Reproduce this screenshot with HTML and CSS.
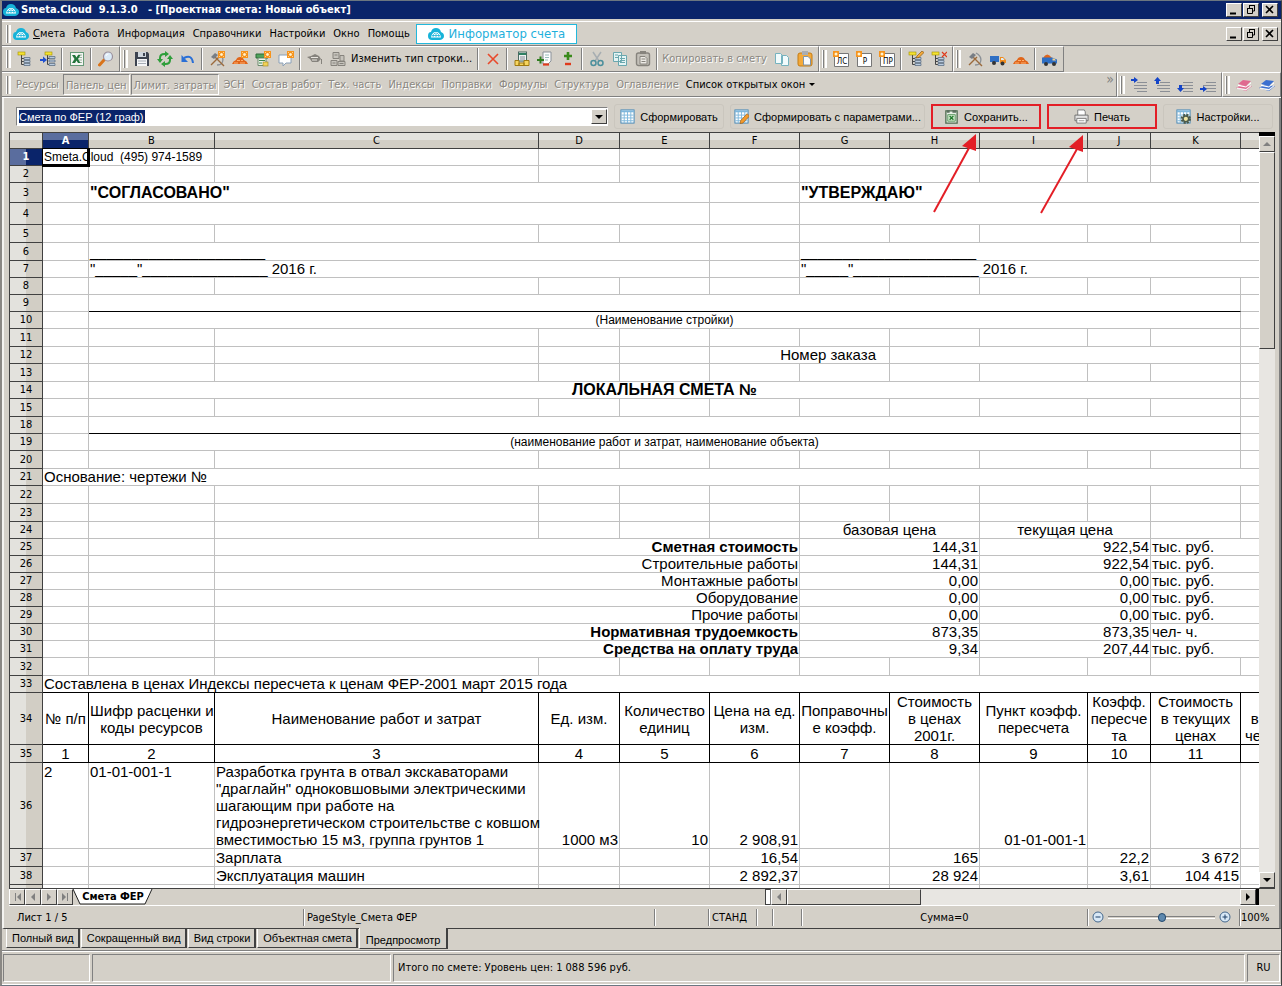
FILE: index.html
```html
<!DOCTYPE html>
<html lang="ru">
<head>
    <meta charset="UTF-8">
    <meta name="viewport" content="width=device-width, initial-scale=1.0">
    <title>Smeta.Cloud 9.1.3.0</title>
    <link rel="stylesheet" href="styles.css">
</head>
<body>
    <svg class="sprite" aria-hidden="true">
        <symbol id="cloud" viewBox="0 0 16 14">
            <path d="M4 13Q0 13 0 9T3 5Q4 1 8 1T13 5Q16 6 16 9T12 13Z" fill="#17b3d9"/>
            <path d="M3 10.500Q4 5 8 5T13 10.500Z" fill="#fff"/>
            <path d="M5 10Q5 7 7 6M8 5.500V10M11 10Q11 7 9 6M4 8.500H12" stroke="#17b3d9" stroke-width=".8" fill="none"/>
        </symbol>
        <symbol id="star" viewBox="0 0 16 16">
            <path d="M9 0H16V7H9Z" fill="#f7941d"/>
            <path d="M10 1L15 6M15 1L10 6" stroke="#ffe0a8" stroke-width=".8"/>
            <circle cx="12.500" cy="3.500" r="1.800" fill="#fff3cf" stroke="#f08000" stroke-width=".6"/>
        </symbol>
        <symbol id="tree" viewBox="0 0 16 16">
            <path d="M4.500 3V13.500H8M4.500 7.500H8M4.500 10.500H8" stroke="#444" fill="none"/>
            <rect x="1" y="1" width="7" height="3" fill="#f4e232" stroke="#a09000" stroke-width=".6"/>
            <path d="M7 6.500H13V8.500H7ZM7 9.500H13V11.500H7ZM7 12.500H13V14.500H7Z" fill="#b9cbe0" stroke="#5f7287" stroke-width=".8"/>
        </symbol>
        <symbol id="tree-in" viewBox="0 0 16 16">
            <path d="M7.500 3V13.500H10M7.500 7.500H10" stroke="#444" fill="none"/>
            <rect x="5" y="1" width="7" height="3" fill="#f4e232" stroke="#a09000" stroke-width=".6"/>
            <path d="M9 5.500H15V7.500H9ZM9 9H15V11H9ZM9 12.500H15V14.500H9Z" fill="#b9cbe0" stroke="#5f7287" stroke-width=".8"/>
            <path d="M0 8H3V5.500L7 9L3 12V10H0Z" fill="#1f4fd0"/>
        </symbol>
        <symbol id="excel" viewBox="0 0 16 16">
            <rect x="1.500" y="1.500" width="13" height="13" fill="#f3f5f3" stroke="#697"/>
            <path d="M9 4H13M9 6.500H13M9 9H13M9 11.500H13" stroke="#9ab39d"/>
            <path d="M3 4H6L7.500 6.500L9 4H11.500L9 8L11.500 12H9L7.500 9.500L6 12H3L5.500 8Z" fill="#21743a"/>
        </symbol>
        <symbol id="lens" viewBox="0 0 16 16">
            <path d="M6.500 8.500L1.500 14" stroke="#d9731a" stroke-width="3" stroke-linecap="round"/>
            <circle cx="10" cy="5.500" r="4.500" fill="#dcebf8" stroke="#9a8f9b" stroke-width="1.200"/>
            <path d="M8 5Q8 3 10.500 3" stroke="#fff" fill="none"/>
        </symbol>
        <symbol id="floppy" viewBox="0 0 16 16">
            <path d="M1 1H13.500L15 2.500V15H1Z" fill="#3c4350"/>
            <rect x="4" y="1" width="8" height="5" fill="#cfd6de"/>
            <rect x="9" y="2" width="2" height="3" fill="#3c4350"/>
            <rect x="3" y="8" width="10" height="7" fill="#f4f5f7"/>
            <path d="M4 10H12M4 12.500H12" stroke="#a6adb6"/>
        </symbol>
        <symbol id="refresh" viewBox="0 0 16 16">
            <path d="M3 9V7Q3 3 7.500 3H9M13 7V9Q13 13 8.500 13H7" stroke="#2f9e3b" stroke-width="2" fill="none"/>
            <path d="M8 0L12 3L8 6ZM8 10L4 13L8 16ZM0 8H6L3 12ZM16 8H10L13 4Z" fill="#2f9e3b"/>
        </symbol>
        <symbol id="undo" viewBox="0 0 16 16">
            <path d="M4 7Q12 3 13 12" stroke="#2a6fd6" stroke-width="2" fill="none"/>
            <path d="M1.500 4V11H8Z" fill="#2a6fd6"/>
        </symbol>
        <symbol id="hammer" viewBox="0 0 16 16">
            <path d="M9 2Q16 6 13 12Q12 14 8 14" stroke="#8b9096" stroke-width="1.300" fill="none"/>
            <path d="M2 14L10 6M6 6L15 15" stroke="#9b6a3c" stroke-width="1.400"/>
            <path d="M2 6L6 2L9 4L5 8Z" fill="#787e85"/>
        </symbol>
        <symbol id="pile" viewBox="0 0 16 16">
            <path d="M0 13Q1 10 4 9Q5 6 8 6T12 9Q15 10 16 13Z" fill="#e0661b"/>
            <path d="M2 12H6M8 12H13M5 9.500H8M9 9.500H11" stroke="#ffb070"/>
        </symbol>
        <symbol id="machine" viewBox="0 0 16 16">
            <path d="M1 3H13V7H1Z" fill="#4fa35b" stroke="#2c6b38"/>
            <path d="M3 7H11V14.500H3Z" fill="#eef3ec" stroke="#6b8a6d"/>
            <path d="M4 9.500H10M4 12H7" stroke="#3f8a4b"/>
            <rect x="8" y="11" width="5" height="4" fill="#f2d256" stroke="#9a8420" stroke-width=".6"/>
        </symbol>
        <symbol id="bubble" viewBox="0 0 16 16">
            <path d="M1 4H13V12H8L5 15V12H1Z" fill="#fff" stroke="#8aa0b8"/>
        </symbol>
        <symbol id="kettle" viewBox="0 0 16 16">
            <path d="M0 6L4 5L8 3L12 5L14 8L11 11H5L3 8Z" fill="#86837d"/>
            <path d="M4 6.500H11M5 9H10" stroke="#e8e5df"/>
            <path d="M14.500 8V13" stroke="#86837d"/>
        </symbol>
        <symbol id="blocks" viewBox="0 0 16 16">
            <path d="M3 1.500H9V7.500H3ZM1 9.500H7V14.500H1ZM8 10.500H15V14.500H8ZM10 4.500H14V10H10Z" fill="#c6c3bc" stroke="#86837d"/>
            <path d="M4.500 4H7.500M2.500 12H5.500M9.500 12.500H13.500" stroke="#86837d"/>
        </symbol>
        <symbol id="cross" viewBox="0 0 16 16">
            <path d="M3 3L13 13M13 3L3 13" stroke="#e8492b" stroke-width="1.600"/>
        </symbol>
        <symbol id="calc" viewBox="0 0 16 16">
            <rect x="4.500" y="1" width="8" height="9" fill="#eef3f2" stroke="#4a6a62"/>
            <path d="M5 3H12" stroke="#2f8064" stroke-width="2"/>
            <path d="M6 6H11M6 8H11" stroke="#889"/>
            <path d="M1 9.500H5V14.500H1ZM10 9.500H15V14.500H10ZM5 12H10V14.500H5Z" fill="#f6d560" stroke="#a07a10"/>
        </symbol>
        <symbol id="doc-pm" viewBox="0 0 16 16">
            <path d="M6 1H14V10L11 13H6Z" fill="#fdfdfd" stroke="#8a9199"/>
            <path d="M8 4H12M8 6.500H12M8 9H11" stroke="#9bb"/>
            <path d="M0 9H7M3.500 5.500V12.500" stroke="#2f7d1f" stroke-width="2"/>
            <path d="M6 13.500H12" stroke="#e03a1c" stroke-width="2.200"/>
        </symbol>
        <symbol id="plus-minus" viewBox="0 0 16 16">
            <path d="M4 5H12M8 1V9" stroke="#3a8a1b" stroke-width="2.600"/>
            <path d="M5 13H11" stroke="#e03a1c" stroke-width="2.400"/>
        </symbol>
        <symbol id="scissors" viewBox="0 0 16 16">
            <path d="M4 1L10 10M12 1L6 10" stroke="#a7aeb2" stroke-width="1.500"/>
            <circle cx="4.500" cy="12" r="2.500" fill="none" stroke="#4b8f9c" stroke-width="1.500"/>
            <circle cx="11.500" cy="12" r="2.500" fill="none" stroke="#4b8f9c" stroke-width="1.500"/>
        </symbol>
        <symbol id="copy" viewBox="0 0 16 16">
            <path d="M1.500 1.500H9.500V10.500H1.500ZM6.500 4.500H14.500V14.500H6.500Z" fill="#e4f4f4" stroke="#6aa7ae"/>
            <path d="M3 4H6M3 6.500H6M8 7.500H13M8 9.500H13M8 11.500H13" stroke="#6aa7ae"/>
        </symbol>
        <symbol id="copy-to" viewBox="0 0 16 16">
            <path d="M1.500 2.500H6.500L8.500 4.500V12.500H1.500ZM7.500 4.500H12.500L14.500 6.500V14.500H7.500Z" fill="#f2fbfc" stroke="#76b3bf"/>
        </symbol>
        <symbol id="paste-off" viewBox="0 0 16 16">
            <rect x="1.500" y="2" width="13" height="12.500" rx="2" fill="#c3c0b9" stroke="#86837d" stroke-width="1.400"/>
            <rect x="5" y="0" width="6" height="3" fill="#86837d"/>
            <path d="M5 5.500H10L12 7.500V13H5Z" fill="#eceae5" stroke="#86837d"/>
            <path d="M6.500 8H10.500M6.500 10.500H10.500" stroke="#86837d"/>
        </symbol>
        <symbol id="paste" viewBox="0 0 16 16">
            <rect x="1" y="2" width="14" height="13" rx="2" fill="#f3a93a" stroke="#c47c14"/>
            <rect x="5" y="0" width="6" height="4" fill="#a9adb3"/>
            <path d="M6.500 5.500H11L13.500 8V14H6.500Z" fill="#f7fafd" stroke="#7f95ab"/>
        </symbol>
        <symbol id="page" viewBox="0 0 16 16">
            <path d="M1.500 2.500H15.500V15.500H1.500Z" fill="#fff" stroke="#777"/>
            <path d="M0 0H6V6H0Z" fill="#f7941d"/>
            <circle cx="3" cy="3" r="1.500" fill="#fff3cf"/>
        </symbol>
        <symbol id="pencil" viewBox="0 0 16 16">
            <path d="M9 5L14 0L16 1.500L11 6.500L8 7Z" fill="#f3a93a" stroke="#8a5a14" stroke-width=".7"/>
        </symbol>
        <symbol id="x-small" viewBox="0 0 16 16">
            <path d="M11 1L16 6M16 1L11 6" stroke="#e03a1c" stroke-width="1.200"/>
        </symbol>
        <symbol id="truck" viewBox="0 0 16 16">
            <path d="M0 5H9V11H0Z" fill="#2f6fc4"/>
            <path d="M10 6H13L16 9V12H10Z" fill="#f28c1e"/>
            <path d="M11 7H13L14.500 9H11Z" fill="#d9ecf8"/>
            <circle cx="4" cy="12" r="2" fill="#333"/>
            <circle cx="12.500" cy="12.500" r="2" fill="#333"/>
        </symbol>
        <symbol id="truck-load" viewBox="0 0 16 16">
            <path d="M1 7Q5 0 10 7Z" fill="#e0661b"/>
            <path d="M0 6.500H10L15 8.500V12.500H0Z" fill="#2f6fc4"/>
            <path d="M10.500 7.500H12.500L14 9.500H10.500Z" fill="#f3d08c"/>
            <circle cx="4" cy="13" r="2" fill="#333"/>
            <circle cx="12" cy="13" r="2" fill="#333"/>
        </symbol>
        <symbol id="lines" viewBox="0 0 16 16">
            <path d="M6 5.500H16M3 8.500H16M3 11.500H16M6 14.500H16" stroke="#8b8f96"/>
        </symbol>
        <symbol id="go-right" viewBox="0 0 16 16"><path d="M0 2H3V0L7 3L3 6V4H0Z" fill="#1444c8"/></symbol>
        <symbol id="go-up" viewBox="0 0 16 16"><path d="M2 7V4H0L3.500 0L7 4H5V7Z" fill="#1444c8"/></symbol>
        <symbol id="go-down" viewBox="0 0 16 16"><path d="M2 8V11H0L3.500 15L7 11H5V8Z" fill="#1444c8"/></symbol>
        <symbol id="go-low" viewBox="0 0 16 16"><path d="M0 11H3V9L7 12L3 15V13H0Z" fill="#1444c8"/></symbol>
        <symbol id="books" viewBox="0 0 16 16">
            <path d="M0 11L5 8L16 9L10 14Z" fill="currentColor"/>
            <path d="M1 10.500L10 12L15 8V9.500L10 13.500L1 12Z" fill="#f2f2f2"/>
            <path d="M2 7L7 3L15 4L10 9Z" fill="currentColor"/>
            <path d="M2 7.500L10 9.500L15 5V6.500L10 10.500L2 9Z" fill="#fff"/>
        </symbol>
        <symbol id="table" viewBox="0 0 16 16">
            <rect x="1" y="1" width="14" height="14" fill="#fff" stroke="#3f84b5"/>
            <path d="M1 2.500H15" stroke="#7fb7dc" stroke-width="2"/>
            <path d="M1.500 6.500H14.500M1.500 9.500H14.500M1.500 12.500H14.500M4.500 3V15M8 3V15M11.500 3V15" stroke="#7fb7dc"/>
        </symbol>
        <symbol id="pen" viewBox="0 0 16 16">
            <path d="M7 12.500L14 5L16.500 7.500L9.500 15L6.500 15.500Z" fill="#f39a2c" stroke="#9a5a10" stroke-width=".7"/>
        </symbol>
        <symbol id="gear" viewBox="0 0 16 16">
            <circle cx="10.500" cy="10.500" r="4" fill="none" stroke="#4b5a4c" stroke-width="3" stroke-dasharray="2 1.140"/>
            <circle cx="10.500" cy="10.500" r="3" fill="#f0e6a4" stroke="#4b5a4c" stroke-width="1.600"/>
        </symbol>
        <symbol id="save-xls" viewBox="0 0 16 16">
            <path d="M2 2H14V15H2Z" fill="#e8efe6" stroke="#4e6b50" stroke-width="1.400"/>
            <path d="M3 1H6V4H3ZM9 1H13V4H9Z" fill="#5c6f5e"/>
            <path d="M4 6H12V13H4Z" fill="#cfe6cc" stroke="#5f9a62"/>
            <path d="M6 7.500L10 11.500M10 7.500L6 11.500" stroke="#1f7a2b" stroke-width="1.400"/>
        </symbol>
        <symbol id="printer" viewBox="0 0 16 16">
            <path d="M4 1H11L12 3V7H4Z" fill="#fff" stroke="#777"/>
            <path d="M1 6.500H15V12.500H1Z" fill="#e4e4e4" stroke="#6d6d6d"/>
            <path d="M3 10H13V15H3Z" fill="#fff" stroke="#777"/>
            <path d="M5 12.500H11" stroke="#999"/>
        </symbol>
    </svg>

    <div class="window">
        <header class="titlebar">
            <svg class="logo"><use href="#cloud"/></svg>
            <h1>Smeta.Cloud&nbsp; 9.1.3.0 &nbsp; - [Проектная смета: Новый объект]</h1>
            <div class="win-buttons">
                <button aria-label="Свернуть"><svg viewBox="0 0 16 14"><path d="M4 10.500H10" stroke="#000" stroke-width="2"/></svg></button>
                <button aria-label="Восстановить"><svg viewBox="0 0 16 14"><path d="M6 2.500H12M6.500 2V5M11.500 2V8H9.500M4 5.500H10M4.500 5V10.500H9.500V5" stroke="#000" fill="none"/></svg></button>
                <button class="close" aria-label="Закрыть"><svg viewBox="0 0 16 14"><path d="M4 3L11 10M11 3L4 10" stroke="#000" stroke-width="1.600"/></svg></button>
            </div>
        </header>

        <nav class="menubar">
            <span class="grip"></span>
            <svg class="logo"><use href="#cloud"/></svg>
            <a href="#"><u>С</u>мета</a>
            <a href="#">Работа</a>
            <a href="#">Информация</a>
            <a href="#">Справочники</a>
            <a href="#">Настройки</a>
            <a href="#">Окно</a>
            <a href="#">Помощь</a>
            <button class="informer"><svg class="logo"><use href="#cloud"/></svg>Информатор счета</button>
            <div class="win-buttons">
                <button aria-label="Свернуть окно"><svg viewBox="0 0 16 14"><path d="M4 10.500H10" stroke="#000" stroke-width="2"/></svg></button>
                <button aria-label="Восстановить окно"><svg viewBox="0 0 16 14"><path d="M6 2.500H12M6.500 2V5M11.500 2V8H9.500M4 5.500H10M4.500 5V10.500H9.500V5" stroke="#000" fill="none"/></svg></button>
                <button class="close" aria-label="Закрыть окно"><svg viewBox="0 0 16 14"><path d="M4 3L11 10M11 3L4 10" stroke="#000" stroke-width="1.600"/></svg></button>
            </div>
        </nav>

        <div class="toolbar">
            <div class="band">
                <span class="grip"></span>
                <button aria-label="Дерево"><svg><use href="#tree"/></svg></button>
                <button aria-label="Вставить в дерево"><svg><use href="#tree-in"/></svg></button>
                <i class="sep"></i>
                <button aria-label="Excel"><svg><use href="#excel"/></svg></button>
                <i class="sep"></i>
                <button aria-label="Поиск"><svg><use href="#lens"/></svg></button>
            </div>
            <div class="band">
                <span class="grip"></span>
                <button aria-label="Сохранить смету"><svg><use href="#floppy"/></svg></button>
                <button aria-label="Обновить"><svg><use href="#refresh"/></svg></button>
                <button aria-label="Отменить"><svg><use href="#undo"/></svg></button>
                <i class="sep"></i>
                <button aria-label="Новая работа"><svg><use href="#hammer"/><use href="#star"/></svg></button>
                <button aria-label="Новый материал"><svg><use href="#pile"/><use href="#star"/></svg></button>
                <button aria-label="Новое оборудование"><svg><use href="#machine"/><use href="#star"/></svg></button>
                <button aria-label="Новый комментарий"><svg><use href="#bubble"/><use href="#star"/></svg></button>
                <i class="sep"></i>
                <button aria-label="Механизм" disabled><svg><use href="#kettle"/></svg></button>
                <button aria-label="Блоки" disabled><svg><use href="#blocks"/></svg></button>
                <button class="text change">Изменить тип строки...</button>
                <i class="sep"></i>
                <button aria-label="Удалить"><svg><use href="#cross"/></svg></button>
                <i class="sep"></i>
                <button aria-label="Расчёт"><svg><use href="#calc"/></svg></button>
                <button aria-label="Изменить количество"><svg><use href="#doc-pm"/></svg></button>
                <button aria-label="Плюс минус"><svg><use href="#plus-minus"/></svg></button>
                <i class="sep"></i>
                <button aria-label="Вырезать"><svg><use href="#scissors"/></svg></button>
                <button aria-label="Копировать"><svg><use href="#copy"/></svg></button>
                <button aria-label="Вставить" disabled><svg><use href="#paste-off"/></svg></button>
                <i class="sep"></i>
                <button class="text copy" disabled>Копировать в смету</button>
                <button aria-label="Копировать в"><svg><use href="#copy-to"/></svg></button>
                <button aria-label="Вставить из"><svg><use href="#paste"/></svg></button>
            </div>
            <div class="band">
                <span class="grip"></span>
                <button aria-label="Локальная смета"><svg><use href="#page"/><text x="9" y="13">ЛС</text></svg></button>
                <button aria-label="Раздел"><svg><use href="#page"/><text x="9" y="13">Р</text></svg></button>
                <button aria-label="Подраздел"><svg><use href="#page"/><text x="9" y="13">ПР</text></svg></button>
                <i class="sep"></i>
                <button aria-label="Изменить раздел"><svg><use href="#tree"/><use href="#pencil"/></svg></button>
                <button aria-label="Удалить раздел"><svg><use href="#tree"/><use href="#x-small"/></svg></button>
            </div>
            <div class="band">
                <span class="grip"></span>
                <button aria-label="Работы"><svg><use href="#hammer"/></svg></button>
                <button aria-label="Перевозка"><svg><use href="#truck"/></svg></button>
                <button aria-label="Материалы"><svg><use href="#pile"/></svg></button>
                <i class="sep"></i>
                <button aria-label="Перевозка материалов"><svg><use href="#truck-load"/></svg></button>
            </div>
        </div>

        <div class="toolbar panels">
            <div class="band wide">
                <span class="grip"></span>
                <button class="text" disabled>Ресурсы</button>
                <button class="text pressed" disabled>Панель цен</button>
                <button class="text pressed" disabled>Лимит. затраты</button>
                <button class="text" disabled>ЭСН</button>
                <button class="text" disabled>Состав работ</button>
                <button class="text" disabled>Тех. часть</button>
                <button class="text" disabled>Индексы</button>
                <button class="text" disabled>Поправки</button>
                <button class="text" disabled>Формулы</button>
                <button class="text" disabled>Структура</button>
                <button class="text" disabled>Оглавление</button>
                <button class="text">Список открытых окон<span class="caret"></span></button>
                <span class="more">»</span>
            </div>
            <div class="band">
                <span class="grip"></span>
                <button aria-label="Вправо"><svg><use href="#lines"/><use href="#go-right"/></svg></button>
                <button aria-label="Вверх"><svg><use href="#lines"/><use href="#go-up"/></svg></button>
                <button aria-label="Вниз"><svg><use href="#lines"/><use href="#go-down"/></svg></button>
                <button aria-label="В конец"><svg><use href="#lines"/><use href="#go-low"/></svg></button>
            </div>
            <div class="band">
                <span class="grip"></span>
                <button class="pink" aria-label="Справочник"><svg><use href="#books"/></svg></button>
                <button class="blue" aria-label="Сборник"><svg><use href="#books"/></svg></button>
            </div>
        </div>

        <main class="work">
            <div class="report-bar">
                <div class="combo">
                    <select aria-label="Форма отчёта">
                        <option>Смета по ФЕР (12 граф)</option>
                    </select>
                    <span class="drop"><span class="caret"></span></span>
                </div>
                <button class="action"><svg class="icon"><use href="#table"/></svg>Сформировать</button>
                <button class="action large"><svg class="icon"><use href="#table"/><use href="#pen"/></svg>Сформировать с параметрами...</button>
                <div class="marked">
                    <button class="action"><svg class="icon"><use href="#save-xls"/></svg>Сохранить...</button>
                    <svg class="arrow" viewBox="0 0 50 80"><path d="M3 78L38 14" stroke="#e31e26" stroke-width="2"/><path d="M45 0L31 12L45 17Z" fill="#e31e26"/></svg>
                </div>
                <div class="marked">
                    <button class="action"><svg class="icon"><use href="#printer"/></svg>Печать</button>
                    <svg class="arrow" viewBox="0 0 50 80"><path d="M-6 79L30 15" stroke="#e31e26" stroke-width="2"/><path d="M36 1L22 13L36 18Z" fill="#e31e26"/></svg>
                </div>
                <button class="action"><svg class="icon"><use href="#table"/><use href="#gear"/></svg>Настройки...</button>
            </div>

            <div class="sheet-area">
                <div class="sheet">
                    <table id="sheet">
                        <colgroup>
                            <col class="w34"><col class="w46"><col class="w126"><col class="w324"><col class="w81">
                            <col class="w90"><col class="w90"><col class="w90"><col class="w90"><col class="w108">
                            <col class="w63"><col class="w90"><col class="w90">
                        </colgroup>
                        <thead>
                            <tr>
                                <th></th><th class="active">A</th><th>B</th><th>C</th><th>D</th><th>E</th><th>F</th>
                                <th>G</th><th>H</th><th>I</th><th>J</th><th>K</th><th></th>
                            </tr>
                        </thead>
                        <tbody></tbody>
                    </table>
                </div>
                <div class="vscroll">
                    <span class="black"></span>
                    <button aria-label="Прокрутить вверх" disabled><span class="tri up"></span></button>
                    <span class="thumb"></span>
                    <span class="track"></span>
                    <button aria-label="Прокрутить вниз"><span class="tri down"></span></button>
                </div>
            </div>

            <div class="sheet-tabs">
                <button class="nav" aria-label="Первый лист" disabled><span class="bar"></span><span class="tri left"></span></button>
                <button class="nav" aria-label="Предыдущий лист" disabled><span class="tri left"></span></button>
                <button class="nav" aria-label="Следующий лист" disabled><span class="tri right"></span></button>
                <button class="nav" aria-label="Последний лист" disabled><span class="tri right"></span><span class="bar"></span></button>
                <button class="sheet-tab">
                    <svg viewBox="0 0 80 16" preserveAspectRatio="none"><path d="M0 0L7 15H72L79 0" fill="#fff" stroke="#222"/></svg>
                    <span>Смета ФЕР</span>
                </button>
                <div class="hscroll">
                    <span class="split"></span>
                    <button aria-label="Прокрутить влево" disabled><span class="tri left"></span></button>
                    <span class="thumb"></span>
                    <span class="track"></span>
                    <button aria-label="Прокрутить вправо"><span class="tri right"></span></button>
                    <span class="black"></span>
                </div>
            </div>

            <div class="sheet-status">
                <span class="page-no">Лист 1 / 5</span>
                <span class="page-style">PageStyle_Смета ФЕР</span>
                <span class="mode-gap"></span>
                <span class="mode">СТАНД</span>
                <span class="flag-a"></span>
                <span class="flag-b"></span>
                <span class="sum">Сумма=0</span>
                <span class="zoom">
                    <svg viewBox="0 0 12 12"><circle cx="6" cy="6" r="5" fill="#d8e8f6" stroke="#44678c"/><path d="M3.500 6H8.500" stroke="#1d3f66"/></svg>
                    <input type="range" min="20" max="180" value="100" aria-label="Масштаб">
                    <svg viewBox="0 0 12 12"><circle cx="6" cy="6" r="5" fill="#d8e8f6" stroke="#44678c"/><path d="M3.500 6H8.500M6 3.500V8.500" stroke="#1d3f66"/></svg>
                </span>
                <span class="percent">100%</span>
            </div>
        </main>

        <nav class="view-tabs">
            <button>Полный вид</button>
            <button>Сокращенный вид</button>
            <button>Вид строки</button>
            <button>Объектная смета</button>
            <button class="current">Предпросмотр</button>
        </nav>

        <footer class="statusbar">
            <span class="s1"></span>
            <span class="s2"></span>
            <span class="total">Итого по смете: Уровень цен: 1 088 596 руб.</span>
            <span class="lang">RU</span>
        </footer>
    </div>

    <script src="script.js"></script>
</body>
</html>
```
FILE: styles.css
```css
* {
    box-sizing: border-box;
    margin: 0;
    padding: 0;
}
body {
    font-family: "DejaVu Sans Condensed", "DejaVu Sans", sans-serif;
    font-size: 11px;
    line-height: 14px;
    color: #000;
    background: #d4d0c8;
}
button, select, input {
    font: inherit;
    color: inherit;
    border: none;
    background: none;
}
button {
    display: flex;
    align-items: center;
    justify-content: center;
    white-space: nowrap;
    flex: none;
}
.sprite {
    display: none;
}
.window {
    display: flex;
    flex-direction: column;
    height: 100vh;
    min-width: 900px;
    overflow: hidden;
    border: 1px solid #6b7680;
    border-left: 2px solid #8a8884;
    border-right-color: #404040;
}

/* title and menu */
.titlebar {
    display: flex;
    align-items: center;
    flex: none;
    height: 18px;
    margin-bottom: 2px;
    padding: 0 3px 0 1px;
    background: #0a246a;
    color: #fff;
}
.titlebar h1 {
    flex: 1;
    padding-left: 2px;
    font-size: 11px;
    font-weight: bold;
}
.logo {
    flex: none;
    width: 16px;
    height: 14px;
}
.win-buttons {
    display: flex;
    gap: 1px;
    margin-left: auto;
}
.win-buttons button {
    width: 16px;
    height: 14px;
    background: #d4d0c8;
    border: 1px solid;
    border-color: #fff #404040 #404040 #fff;
}
.win-buttons .close {
    margin-left: 2px;
}
.win-buttons svg {
    width: 16px;
    height: 14px;
    flex: none;
}
.menubar {
    display: flex;
    align-items: center;
    flex: none;
    height: 25px;
    padding-right: 3px;
    border-top: 1px solid #fff;
    border-bottom: 1px solid #808080;
}
.menubar a {
    padding: 0 4px;
    color: #000;
    text-decoration: none;
}
.grip {
    flex: none;
    width: 5px;
    height: 18px;
    margin: 0 2px 0 4px;
    border: solid #fff;
    border-width: 0 1px;
    background: linear-gradient(90deg, #808080 1px, #d4d0c8 1px 2px, #fff 2px);
}
.informer {
    height: 20px;
    width: 161px;
    gap: 5px;
    margin-left: 2px;
    background: #fff;
    border: 1px solid #22b8dc;
    color: #1fb0dc;
    font-size: 13px;
}

/* toolbars */
.toolbar {
    display: flex;
    flex: none;
    height: 26px;
}
.panels {
    border-bottom: 1px solid #fff;
}
.band {
    display: flex;
    align-items: center;
    padding-right: 2px;
    border: 1px solid;
    border-color: #fff #808080 #808080 #fff;
    border-left-width: 0;
}
.band:not(:first-child) {
    border-left-width: 1px;
}
.band .grip {
    margin-left: 2px;
}
.band:first-child .grip {
    margin-left: 4px;
}
.band.wide {
    flex: 1;
    min-width: 0;
    overflow: hidden;
}
.band button {
    width: 23px;
    height: 22px;
}
.band svg {
    width: 16px;
    height: 16px;
    overflow: visible;
}
.band svg text {
    font-size: 8px;
    text-anchor: middle;
}
.band .text {
    width: auto;
    padding: 0 4px 0 3px;
}
.band .change {
    width: 126px;
}
.band .copy {
    width: 110px;
}
.band .text:disabled {
    color: #8a8781;
    text-shadow: 1px 1px 0 #fff;
}
.band .pressed {
    height: 21px;
    margin-right: 1px;
    padding: 2px 2px 0;
    border: 1px solid;
    border-color: #808080 #fff #fff #808080;
}
.band .pink {
    color: #e06a90;
}
.band .blue {
    color: #3a6fd0;
}
.sep {
    flex: none;
    width: 2px;
    height: 22px;
    margin: 0 2px;
    background: linear-gradient(90deg, #808080 1px, #fff 1px);
}
.caret {
    display: inline-block;
    border: 4px solid transparent;
    border-top-color: #000;
    border-bottom: 0;
}
.text .caret {
    border-width: 3px 3px 0;
    margin-left: 4px;
}
.more {
    align-self: flex-start;
    margin-left: auto;
    color: #808080;
    font-size: 14px;
    line-height: 12px;
}

/* preview area */
.work {
    display: flex;
    flex-direction: column;
    flex: 1;
    min-height: 0;
    border-left: 2px solid #f4f3f0;
    border-right: 2px solid #808080;
    border-bottom: 1px solid #404040;
}
.report-bar {
    display: flex;
    align-items: center;
    gap: 6px;
    flex: none;
    height: 34px;
    padding: 6px 6px 3px 12px;
    font-family: "Liberation Sans", sans-serif;
}
.combo {
    position: relative;
    flex: 1;
    min-width: 0;
    height: 19px;
    border: 1px solid;
    border-color: #808080 #fff #fff #808080;
}
.combo select {
    width: 100%;
    height: 17px;
    padding-left: 2px;
    appearance: none;
    color: #fff;
    background: linear-gradient(#0a246a, #0a246a) 2px 2px / 126px 13px no-repeat #fff;
}
.combo .drop {
    position: absolute;
    top: 1px;
    right: 0;
    display: flex;
    align-items: center;
    justify-content: center;
    width: 16px;
    height: 15px;
    pointer-events: none;
    background: #d4d0c8;
    border: 1px solid;
    border-color: #fff #404040 #404040 #fff;
}
.action {
    gap: 5px;
    width: 110px;
    height: 25px;
    border: 1px solid #cac6be;
    border-radius: 3px;
}
.action.large {
    width: 195px;
}
.icon {
    flex: none;
    width: 15px;
    height: 15px;
    overflow: visible;
}
.marked {
    position: relative;
    flex: none;
}
.marked .action {
    border: 2px solid #e31e26;
    border-radius: 0;
}
.arrow {
    position: absolute;
    top: 30px;
    left: 0;
    z-index: 2;
    width: 50px;
    height: 80px;
    overflow: visible;
    pointer-events: none;
}
.sheet-area {
    display: flex;
    flex: 1;
    min-height: 0;
    margin: 0 4px 0 5px;
}
.sheet {
    flex: 1;
    min-width: 0;
    overflow: hidden;
    background: #fff;
}
table {
    width: 1322px;
    table-layout: fixed;
    border-collapse: separate;
    border-spacing: 0;
    font-family: "Liberation Sans", sans-serif;
    font-size: 15px;
    line-height: 16px;
}
.w34 { width: 34px; }
.w46 { width: 46px; }
.w63 { width: 63px; }
.w81 { width: 81px; }
.w90 { width: 90px; }
.w108 { width: 108px; }
.w126 { width: 126px; }
.w324 { width: 324px; }
th {
    font-family: "DejaVu Sans Condensed", "DejaVu Sans", sans-serif;
    font-size: 11px;
    font-weight: normal;
    border: solid #404040;
    border-width: 0 1px 1px 0;
}
thead th {
    height: 17px;
    line-height: 15px;
    border-top-width: 1px;
    background: linear-gradient(#e3e2dd 50%, #d2cec5 50%);
}
tbody th {
    background: linear-gradient(90deg, #e3e2dd 50%, #d2cec5 50%);
}
th:first-child {
    border-left-width: 1px;
}
th.active {
    color: #fff;
    font-weight: bold;
    background: linear-gradient(#5a6d9e 50%, #0a246a 50%);
}
tbody th.active {
    background: linear-gradient(90deg, #5a6d9e 50%, #0a246a 50%);
}
td {
    padding: 0 1px;
    border: solid #c0c0c0;
    border-width: 0 1px 1px 0;
    white-space: nowrap;
}
.small {
    font-size: 12px;
}
.bold {
    font-weight: bold;
}
.big {
    font-size: 16px;
    font-weight: bold;
}
.center {
    text-align: center;
}
.right {
    text-align: right;
}
.indent {
    padding-right: 13px;
}
.wrap {
    line-height: 17px;
    white-space: pre;
}
.top {
    vertical-align: top;
    line-height: 17px;
}
.bottom {
    vertical-align: bottom;
    line-height: 17px;
}
.rule {
    border-bottom-color: #000;
}
.boxed td {
    border-color: #000;
}
.cursor {
    position: relative;
}
.cursor::after {
    content: "";
    position: absolute;
    inset: -1px -2px -2px -1px;
    border: solid #000;
    border-width: 1px 3px 3px 1px;
}

/* scrollbars */
.vscroll {
    display: flex;
    flex-direction: column;
    flex: none;
    width: 16px;
}
.vscroll .black {
    height: 4px;
    background: #000;
}
.vscroll button, .hscroll button, .nav {
    width: 16px;
    height: 16px;
    background: #d4d0c8;
    border: 1px solid;
    border-color: #fff #404040 #404040 #fff;
}
.thumb {
    flex: none;
    background: #d4d0c8;
    border: 1px solid;
    border-color: #fff #404040 #404040 #fff;
}
.vscroll .thumb {
    height: 26%;
}
.track {
    flex: 1;
    background: #e8e6e2;
}
.tri {
    border: 4px solid transparent;
}
.tri.up {
    border-top: 0;
    border-bottom-color: #000;
}
.tri.down {
    border-bottom: 0;
    border-top-color: #000;
}
.tri.left {
    border-left: 0;
    border-right-color: #000;
}
.tri.right {
    border-right: 0;
    border-left-color: #000;
}
button:disabled .tri.up {
    border-bottom-color: #808080;
}
button:disabled .tri.left {
    border-right-color: #808080;
}
button:disabled .tri.right {
    border-left-color: #808080;
}
.bar {
    width: 1px;
    height: 8px;
    margin: 0 1px;
    background: #808080;
}
.sheet-tabs {
    display: flex;
    flex: none;
    height: 18px;
    margin: 0 4px 0 5px;
    border-top: 1px solid #404040;
    border-bottom: 1px solid #fff;
}
.sheet-tab {
    position: relative;
    width: 80px;
    height: 16px;
    font-weight: bold;
}
.sheet-tab svg {
    position: absolute;
    inset: 0;
    width: 80px;
    height: 16px;
}
.sheet-tab span {
    position: relative;
}
.hscroll {
    display: flex;
    width: 39%;
    margin-left: auto;
    margin-right: 16px;
    height: 16px;
}
.split {
    flex: none;
    width: 6px;
    border: 1px solid #404040;
    border-right-color: #808080;
    background: #fff;
}
.hscroll .thumb {
    width: 27%;
}
.hscroll .black {
    width: 3px;
    background: #000;
}

/* status lines */
.sheet-status {
    display: flex;
    align-items: center;
    flex: none;
    height: 22px;
    padding: 2px 0 2px 5px;
}
.sheet-status > span {
    flex: none;
    height: 17px;
    padding: 2px 3px 0;
    border-left: 1px solid #808080;
    box-shadow: inset 1px 0 0 #fff;
}
.sheet-status .page-no {
    width: 294px;
    padding-left: 8px;
    border: none;
    box-shadow: none;
}
.sheet-status .page-style {
    flex: 1;
    min-width: 0;
}
.mode-gap {
    width: 54px;
}
.mode {
    width: 48px;
}
.flag-a {
    width: 16px;
}
.flag-b {
    width: 29px;
}
.sum {
    width: 286px;
    text-align: center;
}
.sheet-status .zoom {
    display: flex;
    align-items: center;
    gap: 4px;
    width: 152px;
    padding: 0 8px 0 4px;
}
.zoom svg {
    flex: none;
    width: 12px;
    height: 12px;
}
.zoom input {
    flex: 1;
    min-width: 0;
    height: 12px;
    appearance: none;
}
.zoom input::-webkit-slider-runnable-track {
    height: 3px;
    border-top: 1px solid #808080;
    border-bottom: 1px solid #fff;
}
.zoom input::-webkit-slider-thumb {
    appearance: none;
    width: 8px;
    height: 9px;
    margin-top: -4px;
    border: 1px solid #24496e;
    border-radius: 4px;
    background: #5d88ae;
}
.sheet-status .percent {
    width: 40px;
    padding-left: 1px;
}
.view-tabs {
    display: flex;
    flex: none;
    gap: 1px;
    height: 22px;
    padding-left: 4px;
    border-bottom: 1px solid #808080;
    font-family: "Liberation Sans", sans-serif;
}
.view-tabs button {
    height: 19px;
    padding: 0 4px 0 5px;
    border: solid;
    border-color: #fff #404040 #404040 #fff;
    border-width: 0 2px 1px 1px;
}
.view-tabs .current {
    height: 21px;
    margin-top: -1px;
    padding: 4px 6px 0;
    background: #d4d0c8;
}
.statusbar {
    display: flex;
    flex: none;
    gap: 2px;
    height: 34px;
    padding: 2px 1px;
    border-top: 1px solid #fff;
    border-bottom: 1px solid #fff;
}
.statusbar span {
    display: flex;
    align-items: center;
    padding: 0 4px;
    border: 1px solid;
    border-color: #808080 #fff #fff #808080;
}
.s1 {
    width: 87px;
}
.s2 {
    width: 299px;
}
.total {
    flex: 1;
}
.lang {
    width: 33px;
    justify-content: center;
}
```
FILE: script.js
```js
const COLUMNS = 12;
const LINE = '_____________________';
const DATE = '"_____"_______________ 2016 г.';

// each cell is [text, colspan, classes]; the rest of the row is filled with empty cells
const e = ['', 1, ''];
const money = (name, cls, base, now, unit) =>
    [e, e, [name, 4, 'right ' + cls], [base, 2, 'right'], [now, 2, 'right'], [unit, 2, '']];

const rows = [
    [1, 17, [['Smeta.Cloud\u00a0 (495) 974-1589', 1, 'small cursor']]],
    [2, 17, []],
    [3, 20, [e, ['"СОГЛАСОВАНО"', 4, 'big'], e, ['"УТВЕРЖДАЮ"', 6, 'big']]],
    [4, 22, [e, ['', 4, ''], e, ['', 6, '']]],
    [5, 18, []],
    [6, 18, [e, [LINE, 4, ''], e, [LINE, 6, '']]],
    [7, 17, [e, [DATE, 4, ''], e, [DATE, 6, '']]],
    [8, 17, []],
    [9, 17, [e, ['', 10, 'rule']]],
    [10, 17, [e, ['(Наименование стройки)', 10, 'small center']]],
    [11, 18, []],
    [12, 17, [e, e, e, e, e, ['Номер заказа', 2, 'right indent'], ['', 4, '']]],
    [13, 18, []],
    [14, 17, [e, ['ЛОКАЛЬНАЯ СМЕТА №', 10, 'big center']]],
    [15, 18, []],
    [18, 17, [e, ['', 10, 'rule']]],
    [19, 17, [e, ['(наименование работ и затрат, наименование объекта)', 10, 'small center']]],
    [20, 18, []],
    [21, 17, [['Основание: чертежи №', 12, '']]],
    [22, 18, []],
    [23, 18, []],
    [24, 17, [e, e, e, e, e, e, ['базовая цена', 2, 'center'], ['текущая цена', 2, 'center']]],
    [25, 17, money('Сметная стоимость', 'bold', '144,31', '922,54', 'тыс. руб.')],
    [26, 17, money('Строительные работы', '', '144,31', '922,54', 'тыс. руб.')],
    [27, 17, money('Монтажные работы', '', '0,00', '0,00', 'тыс. руб.')],
    [28, 17, money('Оборудование', '', '0,00', '0,00', 'тыс. руб.')],
    [29, 17, money('Прочие работы', '', '0,00', '0,00', 'тыс. руб.')],
    [30, 17, money('Нормативная трудоемкость', 'bold', '873,35', '873,35', 'чел- ч.')],
    [31, 17, money('Средства на оплату труда', 'bold', '9,34', '207,44', 'тыс. руб.')],
    [32, 18, []],
    [33, 17, [['Составлена в ценах Индексы пересчета к ценам ФЕР-2001 март 2015 года', 12, 'rule']]],
    [34, 52, ['№ п/п', 'Шифр расценки и\nкоды ресурсов', 'Наименование работ и затрат', 'Ед. изм.',
        'Количество\nединиц', 'Цена на ед.\nизм.', 'Поправочны\nе коэфф.', 'Стоимость\nв ценах\n2001г.',
        'Пункт коэфф.\nпересчета', 'Коэфф.\nпересче\nта', 'Стоимость\nв текущих\nценах', 'ЗТР\nв текущих\nчеловеко-ч.']
        .map(text => [text, 1, 'center wrap']), 'boxed'],
    [35, 18, ['1', '2', '3', '4', '5', '6', '7', '8', '9', '10', '11', '12'].map(text => [text, 1, 'center']), 'boxed'],
    [36, 86, [['2', 1, 'top'], ['01-01-001-1', 1, 'top'],
        ['Разработка грунта в отвал экскаваторами\n"драглайн" одноковшовыми электрическими\nшагающим при работе на\nгидроэнергетическом строительстве с ковшом\nвместимостью 15 м3, группа грунтов 1', 1, 'wrap'],
        ['1000 м3', 1, 'right bottom'], ['10', 1, 'right bottom'], ['2 908,91', 1, 'right bottom'],
        e, e, ['01-01-001-1', 1, 'right bottom']]],
    [37, 18, [e, e, ['Зарплата', 1, ''], e, e, ['16,54', 1, 'right'], e, ['165', 1, 'right'], e, ['22,2', 1, 'right'], ['3 672', 1, 'right']]],
    [38, 18, [e, e, ['Эксплуатация машин', 1, ''], e, e, ['2 892,37', 1, 'right'], e, ['28 924', 1, 'right'], e, ['3,61', 1, 'right'], ['104 415', 1, 'right']]],
    [39, 18, [e, e, e, e, e, ['137,43', 1, 'right'], e, ['1 374', 1, 'right'], e, ['22,2', 1, 'right'], ['30 509', 1, 'right']]]
];

const body = document.querySelector('#sheet tbody');

rows.forEach(([number, height, cells, rowClass]) => {
    const tr = body.insertRow();
    tr.className = rowClass || '';
    tr.style.height = height + 'px';

    const th = document.createElement('th');
    th.textContent = number;
    th.className = number === 1 ? 'active' : '';
    tr.appendChild(th);

    let used = 0;
    const list = cells.slice();
    while (used < COLUMNS) {
        const [text, span, cls] = list.shift() || e;
        const td = tr.insertCell();
        td.textContent = text;
        td.colSpan = span;
        td.className = cls;
        used += span;
    }
});
```
